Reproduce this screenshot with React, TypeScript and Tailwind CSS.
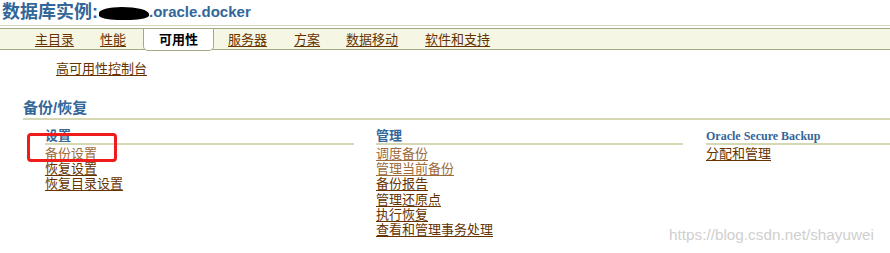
import React from "react";

const cjk = "font-['Liberation_Sans','Noto_Sans_CJK_SC',sans-serif]";

const tabs = [
  { label: "主目录", cls: "pl-[13px] pr-[13px]" },
  { label: "性能", cls: "pl-[13px] pr-[17px]" },
  { label: "可用性", active: true },
  { label: "服务器", cls: "pl-[14px] pr-[13px]" },
  { label: "方案", cls: "pl-[14px] pr-[13px]" },
  { label: "数据移动", cls: "pl-[13px] pr-[14px]" },
  { label: "软件和支持", cls: "pl-[13px] pr-[13px]" },
];

const columns = [
  {
    title: "设置",
    lineCls: "mr-[22px]",
    links: [
      { text: "备份设置", visited: true },
      { text: "恢复设置" },
      { text: "恢复目录设置" },
    ],
  },
  {
    title: "管理",
    lineCls: "mr-[23px]",
    links: [
      { text: "调度备份", visited: true },
      { text: "管理当前备份", visited: true },
      { text: "备份报告" },
      { text: "管理还原点" },
      { text: "执行恢复" },
      { text: "查看和管理事务处理" },
    ],
  },
  {
    title: "Oracle Secure Backup",
    serif: true,
    lineCls: "",
    links: [{ text: "分配和管理" }],
  },
];

export default function App() {
  return (
    <div className={`relative w-[890px] h-[253px] bg-white overflow-hidden leading-none ${cjk}`}>
      {/* page title */}
      <div className="h-[25px] pl-[2px] pt-[3px] flex items-end pb-[3px]">
        <span className="text-[18px] leading-[20px] font-bold text-[#336699]">数据库实例:</span>
        <span className="inline-block w-[50px] h-[13px] mb-[2px] ml-[1px] bg-black rounded-[50%_60%_40%_40%]" />
        <span className="text-[15px] leading-[20px] font-bold text-[#336699] font-['Liberation_Sans',sans-serif]">
          .oracle.docker
        </span>
      </div>
      <div className="h-px bg-[#d3d7bb]" />

      {/* tab bar */}
      <div className="mt-[2px] h-[22px] flex bg-[#f6f6e5] border-y border-[#a4aa86] pl-[22px]">
        {tabs.map((t) =>
          t.active ? (
            <div
              key={t.label}
              className="-mb-[2px] flex items-center px-[15px] bg-white border-x border-b border-[#a4aa86] rounded-b-[5px] text-[13px] leading-[15px] font-bold text-black"
            >
              {t.label}
            </div>
          ) : (
            <div key={t.label} className={`flex items-center ${t.cls}`}>
              <a className="text-[13px] leading-[15px] text-[#663300] underline underline-offset-[2px]">{t.label}</a>
            </div>
          )
        )}
      </div>

      {/* sub link */}
      <div className="pl-[56px] mt-[11px] text-[13px] leading-[16px]">
        <a className="text-[#663300] underline underline-offset-[2px]">高可用性控制台</a>
      </div>

      {/* section */}
      <div className="ml-[23px] mt-[22px]">
        <h2 className="text-[15px] leading-[18px] font-bold text-[#336699]">备份/恢复</h2>
        <div className="mt-px h-[2px] bg-[#d6d8b4]" />
      </div>

      <div className="grid grid-cols-[331px_330px_1fr] pl-[45px] mt-[9px]">
        {columns.map((c) => (
          <div key={c.title} className="flex flex-col">
            <div
              className={
                c.serif
                  ? "text-[12px] leading-[14px] font-bold text-[#336699] font-['Liberation_Serif',serif]"
                  : "text-[13px] leading-[14px] font-bold text-[#336699]"
              }
            >
              {c.title}
            </div>
            <div className={`h-[2px] bg-[#d6d8b4] ${c.lineCls}`} />
            <div className="flex flex-col items-start pt-[1px]">
              {c.links.map((l) => (
                <a
                  key={l.text}
                  className={`text-[13px] leading-[15.2px] underline underline-offset-[2px] ${
                    l.visited ? "text-[#9c6b3b]" : "text-[#663300]"
                  }`}
                >
                  {l.text}
                </a>
              ))}
            </div>
          </div>
        ))}
      </div>

      {/* annotation box */}
      <div className="absolute left-[27px] top-[133px] w-[90px] h-[29px] border-[3px] border-[#f01c1c] rounded-[4px]" />

      {/* watermark */}
      <div className="absolute left-[669px] top-[226px] text-[15.3px] leading-[18px] text-[#cfcfcf] font-['Liberation_Sans',sans-serif]">
        https://blog.csdn.net/shayuwei
      </div>
    </div>
  );
}
